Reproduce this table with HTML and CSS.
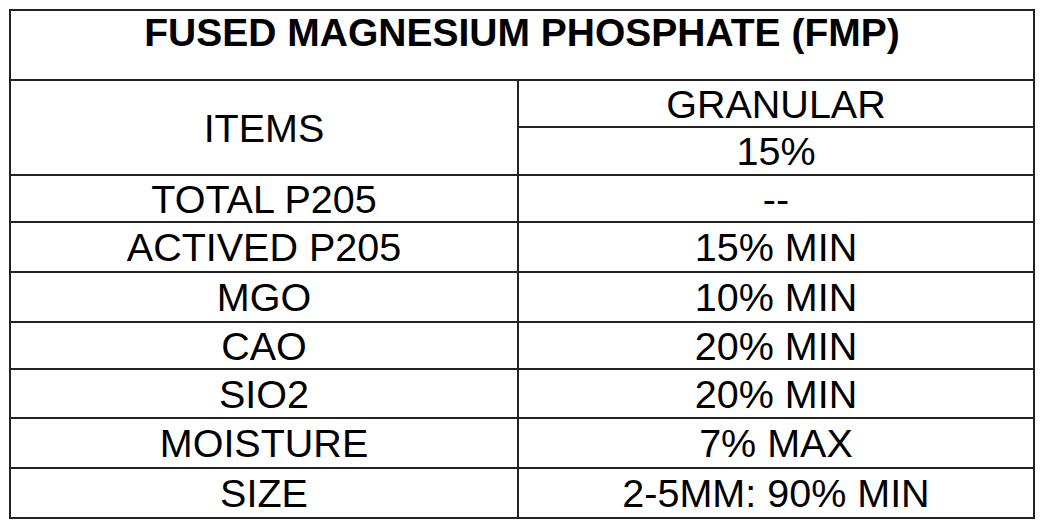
FILE: index.html
```html
<!DOCTYPE html>
<html>
<head>
<meta charset="utf-8">
<link rel="stylesheet" href="styles.css">
</head>
<body>
<table class="spec">
  <colgroup><col class="c-items"><col class="c-value"></colgroup>
  <tr class="h-title"><th colspan="2" class="title">FUSED MAGNESIUM PHOSPHATE (FMP)</th></tr>
  <tr class="h45"><td rowspan="2">ITEMS</td><td>GRANULAR</td></tr>
  <tr class="h46"><td>15%</td></tr>
  <tr class="h45"><td>TOTAL P205</td><td>--</td></tr>
  <tr class="h48"><td>ACTIVED P205</td><td>15% MIN</td></tr>
  <tr class="h48"><td>MGO</td><td>10% MIN</td></tr>
  <tr class="h45"><td>CAO</td><td>20% MIN</td></tr>
  <tr class="h47"><td>SIO2</td><td>20% MIN</td></tr>
  <tr class="h48"><td>MOISTURE</td><td>7% MAX</td></tr>
  <tr class="h48"><td>SIZE</td><td>2-5MM: 90% MIN</td></tr>
</table>
</body>
</html>
```
FILE: styles.css
```css
html, body {
  margin: 0;
  padding: 0;
  background: #ffffff;
}
body {
  padding: 9px 0 0 9px;
  font-family: "Liberation Sans", Arial, sans-serif;
  color: #000;
}
.spec {
  border-collapse: separate;
  border-spacing: 0;
  border-top: 2px solid #222;
  border-left: 2px solid #222;
  width: 1026px;
  table-layout: fixed;
}
.c-items { width: 508px; }
.c-value { width: 516px; }
.spec th,
.spec td {
  border-right: 2px solid #222;
  border-bottom: 2px solid #222;
  padding: 0;
  text-align: center;
  vertical-align: middle;
  font-size: 39.5px;
  line-height: 44px;
  white-space: nowrap;
}
.spec .title {
  font-weight: bold;
  font-size: 39px;
  vertical-align: top;
}
.h-title { height: 70px; }
.h45 { height: 47px; }
.h46 { height: 48px; }
.h47 { height: 49px; }
.h48 { height: 50px; }
```
